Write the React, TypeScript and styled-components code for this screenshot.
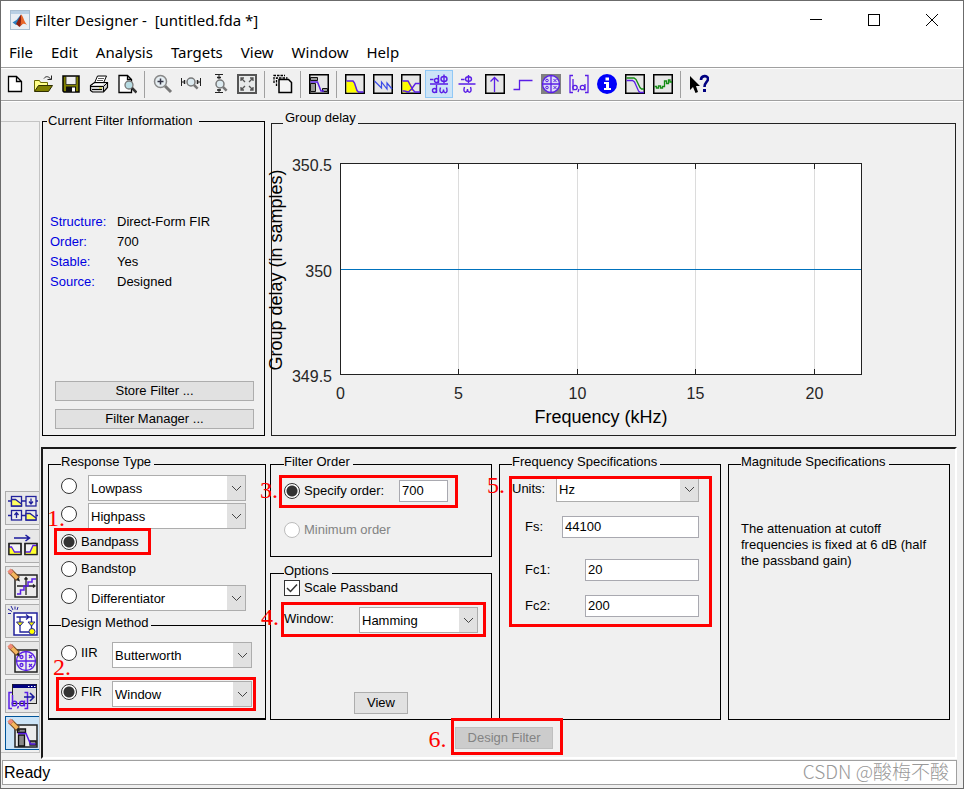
import React from "react";
import styled, { createGlobalStyle } from "styled-components";

const GlobalStyle = createGlobalStyle`
  *, *::before, *::after { box-sizing: border-box; }
  body {
    margin: 0;
    background: #f0f0f0;
    color: #000;
    font-family: "Liberation Sans", Arial, sans-serif;
    font-size: 13px;
    line-height: 16px;
  }
  button, input, select { font: inherit; color: inherit; }
`;

/* ---------- window frame ---------- */

const AppWindow = styled.div`
  display: flex;
  flex-direction: column;
  min-height: 100vh;
  border: 1px solid #6b6b6b;
  background: #f0f0f0;
`;

const TitleBar = styled.header`
  display: flex;
  align-items: center;
  height: 37px;
  padding-left: 9px;
  background: #fff;
`;

const Title = styled.h1`
  flex: 1;
  margin: 0 0 0 5px;
  font: 400 15px/22px "Noto Sans", "Open Sans", sans-serif;
  white-space: pre;
`;

const CaptionButton = styled.button`
  display: grid;
  place-items: center;
  width: 58px;
  height: 36px;
  padding: 0 4px 0 0;
  border: 0;
  background: transparent;
`;

const MenuBar = styled.nav`
  display: flex;
  align-items: center;
  gap: 18px;
  height: 29px;
  padding: 0 0 2px 8px;
  background: #fff;
`;

const MenuItem = styled.button`
  padding: 0;
  border: 0;
  background: transparent;
  font: 400 15px/20px "Noto Sans", "Open Sans", sans-serif;
`;

const ToolBar = styled.div`
  display: flex;
  align-items: center;
  height: 34px;
  border-top: 1px solid #a0a0a0;
  border-bottom: 1px solid #a0a0a0;
  box-shadow: inset 0 1px #fff, 0 1px #fff;
`;

const ToolButton = styled.button<{ $active?: boolean }>`
  display: grid;
  flex: none;
  place-items: center;
  width: 28px;
  height: 28px;
  padding: 0;
  border: 1px solid ${(p) => (p.$active ? "#90c8f6" : "transparent")};
  background: ${(p) => (p.$active ? "#cce4f7" : "transparent")};
`;

const ToolDivider = styled.span`
  flex: none;
  width: 1px;
  height: 27px;
  margin: 0 4px 0 3px;
  background: #a0a0a0;
`;

const Body = styled.div`
  display: flex;
  flex: 1;
`;

const Rail = styled.div`
  display: flex;
  flex: none;
  flex-direction: column;
  justify-content: flex-end;
  width: 39px;
  margin: 20px 0 7px;
  padding: 0 0 2px 4px;
  border: 1px solid #c4c4c4;
  border-left: 0;
`;

const RailList = styled.div`
  display: flex;
  flex-direction: column;
  justify-content: space-between;
  height: 259px;
`;

const RailButton = styled.button<{ $active?: boolean }>`
  width: 34px;
  height: 34px;
  padding: 0;
  border: 1px solid ${(p) => (p.$active ? "#005499" : "#adadad")};
  border-right: 0;
  background: ${(p) => (p.$active ? "#cce4f7" : "#e8e8e8")};
  svg { display: block; }
`;

const Main = styled.main`
  display: flex;
  flex: 1;
  flex-direction: column;
  min-width: 0;
  padding: 10px 6px 1px 1px;
`;

const TopRow = styled.div`
  display: grid;
  flex: 1;
  grid-template-columns: 223fr 685fr;
  gap: 6px;
  padding: 0 1px;
  margin-bottom: 11px;
`;

/* ---------- framed groups ---------- */

const Group = styled.fieldset<{ $pad?: string; $grow?: boolean }>`
  display: flex;
  flex: ${(p) => (p.$grow ? "1" : "none")};
  flex-direction: column;
  min-width: 0;
  margin: 0;
  padding: ${(p) => p.$pad ?? "0"};
  border: 1px solid #000;
`;

const Legend = styled.legend`
  padding: 0 3px 4px 0;
  line-height: 14px;
`;

const InfoGroup = styled(Group)`
  margin-top: 1px;
  ${Legend} { padding: 2px 6px 2px 1px; }
`;

const PlotGroup = styled(Group)`
  border-color: #222;
  ${Legend} { margin-left: 11px; padding: 0 2px 10px 2px; }
`;

const InfoList = styled.dl`
  display: grid;
  flex: 1;
  grid-template-columns: 67px 1fr;
  grid-auto-rows: 20px;
  align-content: start;
  margin: 0;
  padding: 82px 0 0 3px;
  line-height: 20px;
  dt { color: #0000e0; }
  dd { margin: 0; }
`;

const ButtonStack = styled.div`
  display: grid;
  gap: 8px;
  padding: 0 10px 0 8px;
`;

const PushButton = styled.button`
  height: 20px;
  padding: 0 12px;
  border: 1px solid #adadad;
  background: #e1e1e1;
  line-height: 18px;
`;

const TallButton = styled(PushButton)`
  align-self: center;
  height: 22px;
  line-height: 20px;
  &:disabled { border-color: #bfbfbf; background: #ccc; color: #838383; }
`;

const Chart = styled.svg`
  display: block;
  width: 100%;
  overflow: visible;
  font-family: "Liberation Sans", Arial, sans-serif;
`;

/* ---------- design pane ---------- */

const DesignPane = styled.section`
  display: flex;
  flex-direction: column;
  padding: 6px 5px 8px;
  border: solid;
  border-width: 2px;
  border-color: #1a1a1a #fff #fff #1a1a1a;
`;

const Columns = styled.div`
  display: grid;
  grid-template-columns: 218fr 226fr 229fr 229fr;
  min-height: 265px;
`;

const Column = styled.div<{ $lead?: number; $gap?: number }>`
  display: flex;
  flex-direction: column;
  gap: ${(p) => p.$gap ?? 0}px;
  min-width: 0;
  padding-left: ${(p) => p.$lead ?? 0}px;
`;

const ResponseGroup = styled(Group)`
  border-bottom: 0;
`;

const MethodGroup = styled(Group)`
  margin-top: -9px;
  border-bottom-width: 2px;
`;

const Rows = styled.div<{ $gap: number }>`
  display: flex;
  flex-direction: column;
  gap: ${(p) => p.$gap}px;
`;

const ChoiceRow = styled.div<{ $plain?: boolean; $label?: number }>`
  position: relative;
  display: grid;
  grid-template-columns: ${(p) => (p.$plain ? "1fr" : `${p.$label ?? 27}px 1fr`)};
  height: ${(p) => (p.$plain ? 25 : 26)}px;
`;

const ChoiceLabel = styled.label<{ $disabled?: boolean }>`
  display: flex;
  gap: 4px;
  align-items: center;
  height: 16px;
  margin: 3px 0;
  color: ${(p) => (p.$disabled ? "#838383" : "#000")};
  line-height: 18px;
  white-space: nowrap;
`;

const ScaleLabel = styled(ChoiceLabel)`
  margin: -2px 0 11px;
`;

const Radio = styled.input.attrs({ type: "radio" })`
  flex: none;
  width: 16px;
  height: 16px;
  margin: 0;
  appearance: none;
  border: 1px solid #333;
  border-radius: 50%;
  background: #fff;
  &:checked { background: radial-gradient(circle, #333 0 5px, #fff 6px); }
  &:disabled { border-color: #bcbcbc; }
`;

const CheckCell = styled.span`
  display: grid;
  flex: none;
  width: 16px;
  height: 16px;
  > * { grid-area: 1 / 1; }
  svg { pointer-events: none; }
`;

const CheckBox = styled.input.attrs({ type: "checkbox" })`
  width: 16px;
  height: 16px;
  margin: 0;
  appearance: none;
  border: 1px solid #333;
  background: #fff;
`;

const SelectCell = styled.span`
  display: grid;
  min-width: 0;
  > * { grid-area: 1 / 1; }
  svg {
    place-self: center end;
    margin-right: 4px;
    pointer-events: none;
  }
`;

const Select = styled.select`
  width: 100%;
  height: 26px;
  margin: 0;
  padding: 2px 20px 0 2px;
  appearance: none;
  border: 1px solid #adadad;
  border-radius: 0;
  background: linear-gradient(#e1e1e1, #e1e1e1) right / 18px 100% no-repeat #fff;
`;

const TextBox = styled.input.attrs({ type: "text" })`
  width: 100%;
  height: 22px;
  padding: 0 2px 2px;
  border: 1px solid #a9a9b0;
  border-radius: 0;
  background: #fff;
`;

const OrderRow = styled.div`
  position: relative;
  display: grid;
  grid-template-columns: 115px 49px;
  height: 22px;
`;

const FieldRow = styled.div<{ $label: number; $indent?: number }>`
  display: grid;
  grid-template-columns: ${(p) => p.$label}px 1fr;
  align-items: center;
  padding-left: ${(p) => p.$indent ?? 0}px;
`;

const WindowRow = styled(FieldRow)`
  position: relative;
  align-items: start;
  label { margin-top: 4px; }
`;

const FieldStack = styled.div`
  position: relative;
  display: grid;
  grid-template-rows: 26px 29px 22px 22px;
  row-gap: 14px;
  ${FieldRow} { align-self: start; }
`;

const Spring = styled.div`
  flex: 1;
`;

const Note = styled.p`
  margin: 0;
`;

const Footer = styled.div`
  display: flex;
  justify-content: center;
  padding: 7px 0 0 10px;
`;

const FooterItem = styled.div`
  position: relative;
  display: flex;
`;

/* ---------- red step markers laid over the controls ---------- */

const MarkFrame = styled.div<{ $inset: string }>`
  position: absolute;
  inset: ${(p) => p.$inset};
  border: 3px solid #f00;
  pointer-events: none;
`;

const MarkNumber = styled.span<{ $left: number; $top: number }>`
  position: absolute;
  left: ${(p) => p.$left}px;
  top: ${(p) => p.$top}px;
  color: #f00;
  font: 400 24px/24px "Liberation Serif", serif;
  white-space: nowrap;
`;

const StatusBar = styled.footer`
  display: flex;
  align-items: center;
  justify-content: space-between;
  height: 25px;
  margin: 0 6px 3px 1px;
  padding: 0 7px 0 1px;
  border: 1px solid #a0a0a0;
  background: #fff;
  font-size: 16px;
`;

const Watermark = styled.span`
  padding-bottom: 4px;
  color: #999;
  font: 300 19px/20px "Noto Sans CJK SC", sans-serif;
`;

/* ---------- small pieces ---------- */

function Step({ n, inset, left, top }: { n: number; inset: string; left: number; top: number }) {
  return (
    <MarkFrame $inset={inset}>
      <MarkNumber $left={left} $top={top}>{n}.</MarkNumber>
    </MarkFrame>
  );
}

function DropDown({ id, value, options, label }: { id?: string; value: string; options: string[]; label?: string }) {
  return (
    <SelectCell>
      <Select id={id} aria-label={label} defaultValue={value}>
        {[value, ...options].map((o) => <option key={o}>{o}</option>)}
      </Select>
      <svg width="11" height="7" viewBox="0 0 11 7" fill="none" stroke="#444"><path d="M1 1l4.500 4.500L10 1" /></svg>
    </SelectCell>
  );
}

/* ---------- toolbar drawings, 20 x 20 ---------- */

const P = "#5a1ee6";

const Frame = () => <rect x="0.750" y="0.750" width="18.500" height="18.500" fill="#e6e6e6" stroke="#000" strokeWidth="1.500" />;

const magnifier = (cx: number, cy: number, r: number) => (
  <g>
    <circle cx={cx} cy={cy} r={r} fill="#dceaf0" stroke="#777" strokeWidth="1.500" />
    <path d={`M${cx + r * 0.75} ${cy + r * 0.75}l${r * 0.9} ${r * 0.9}`} stroke="#777" strokeWidth="2.500" />
  </g>
);

const toolIcons: Record<string, React.ReactNode> = {
  New: <path d="M3.500 2.500h8l5 5v10h-13zM11.500 2.500v5h5" fill="#fff" stroke="#000" strokeWidth="1.300" />,
  Open: (
    <>
      <path d="M1.500 17V6.500h5l1 2h7v3" fill="#ffff8a" stroke="#6a6a00" />
      <path d="M1.500 17.500l4-6h14l-4 6z" fill="#808000" stroke="#2e2e00" />
      <path d="M11 4.500c2-3 5-2 7 1M18.500 1.500v4h-4" fill="none" stroke="#222" />
    </>
  ),
  Save: (
    <>
      <path d="M2 2h16v16H3l-1-1z" fill="#808000" stroke="#000" strokeWidth="1.500" />
      <path d="M5 2.500h10v8H5z" fill="#eee" stroke="#222" strokeWidth="0.800" />
      <path d="M5 12.500h10V18H5z" fill="#111" /><path d="M11 13.500h3v4h-3z" fill="#fff" />
    </>
  ),
  Print: (
    <>
      <path d="M5.500 9l3-7h9l-3 7z" fill="#fff" stroke="#000" />
      <path d="M9 4.500h6M8 6.500h6" stroke="#333" strokeWidth="0.800" />
      <path d="M1.500 11.500l4-3h13v5l-4 4.500h-11l-2-1.500z" fill="#d4d4d4" stroke="#000" strokeWidth="1.200" />
      <path d="M1.500 12.500h13l4-4M14.500 12.500v5M3 15.500h10" fill="none" stroke="#000" />
      <path d="M4 10.500h10" stroke="#fff" /><path d="M10 13.500h3v1h-3z" fill="#cc0" />
    </>
  ),
  "Print preview": (
    <>
      <path d="M2 1.500h8.500l4 4v13H2zM10.500 1.500v4h4" fill="#fff" stroke="#000" strokeWidth="1.300" />
      <circle cx="12" cy="11" r="4" fill="#b8dde4" stroke="#777" strokeWidth="1.300" />
      <path d="M15 14l4.500 4.500" stroke="#333" strokeWidth="2.500" />
    </>
  ),
  "Zoom in": (
    <>
      <path d="M12 12l6 6" stroke="#777" strokeWidth="3" />
      <circle cx="7.500" cy="7.500" r="6" fill="#e6eef2" stroke="#888" strokeWidth="1.500" />
      <path d="M4.500 7.500h6M7.500 4.500v6" stroke="#334" strokeWidth="1.500" />
    </>
  ),
  "Zoom X": (
    <>
      {magnifier(10, 8, 4)}
      <path d="M0.500 4v8M19.500 4v8M0 8h4M16 8h4" stroke="#222" />
      <path d="M3.500 6v4M16.500 6v4" stroke="#222" strokeWidth="1.500" />
    </>
  ),
  "Zoom Y": (
    <>
      {magnifier(11, 10, 4)}
      <path d="M6 0.500h8M6 18.500h8M10 1v4M10 15v4" stroke="#222" />
      <path d="M8 3.500h4M8 16h4" stroke="#222" strokeWidth="1.500" />
    </>
  ),
  "Full view": (
    <>
      <rect x="1" y="1" width="18" height="18" fill="#e8eaea" stroke="#555" strokeWidth="2" />
      <path d="M4 7V4h3M13 4h3v3M16 13v3h-3M7 16H4v-3M4 4l4 4M16 4l-4 4M16 16l-4-4M4 16l4-4" fill="none" stroke="#555" strokeWidth="1.300" />
    </>
  ),
  "New analysis window": (
    <>
      <path d="M1 9V1.500h11M3.500 12V4h11" fill="none" stroke="#000" strokeWidth="1.300" strokeDasharray="2.500 1" />
      <path d="M6 5.500h9.500l3 3V18.500H6z" fill="#f4f4f4" stroke="#000" strokeWidth="1.500" />
    </>
  ),
  "Filter specifications": (
    <>
      <Frame />
      <path d="M1.500 3.500h7v3h-7zM1.500 9.500h5v8h-5z" fill="#999" stroke="#111" />
      <path d="M13.500 14.500h5v3h-5z" fill="#999" stroke="#111" />
      <path d="M1.500 8h7l3.500 9h3" fill="none" stroke={P} strokeWidth="1.500" />
    </>
  ),
  "Magnitude response": (
    <>
      <Frame /><path d="M1.500 7H9l4 11.500H1.500z" fill="#ff0" />
      <path d="M1.500 7H8l1.500 2 2.500 7.500 1.500 1.500h5" fill="none" stroke={P} strokeWidth="1.500" />
    </>
  ),
  "Phase response": (
    <>
      <Frame /><path d="M1.500 7l7 7V8l5.500 7V9l5 6" fill="none" stroke="#3a4be8" strokeWidth="1.200" />
    </>
  ),
  "Magnitude and phase": (
    <>
      <Frame /><path d="M1.500 7H8l4 7v3H8l-4 1.500H1.500z" fill="#ff0" />
      <path d="M1.500 7H7l5 9 2 2h5M1.500 17h2l4 1 3-3 4-5.500h4.500" fill="none" stroke={P} strokeWidth="1.400" />
    </>
  ),
  "Group delay response": (
    <g fill="none" stroke={P} strokeWidth="1.400">
      <path d="M1 10h18M1 5.500h3.500M9.500 1v8" /><circle cx="7.500" cy="6.500" r="2" />
      <path d="M15 0.500v9" /><ellipse cx="15" cy="5" rx="3" ry="2.500" />
      <path d="M7.500 11v8" /><circle cx="5.500" cy="16.500" r="2" />
      <path d="M11.500 13.500c-2 6 3 7 3 2 0 5 5 4 3-2" />
    </g>
  ),
  "Phase delay": (
    <g fill="none" stroke={P} strokeWidth="1.400">
      <path d="M1.500 10h17M4 5.500h3.500M11.500 1v8" /><ellipse cx="11.500" cy="5" rx="3" ry="2.300" />
      <path d="M7.500 13c-2 6 3 7 3 2 0 5 5 4 3-2" />
    </g>
  ),
  "Impulse response": (
    <>
      <Frame /><path d="M9.500 18V3.500M5.500 7.500l4-4 4 4" fill="none" stroke={P} strokeWidth="1.300" />
    </>
  ),
  "Step response": <path d="M0.500 15.500h6V6.500h13" fill="none" stroke={P} strokeWidth="1.300" />,
  "Pole-zero plot": (
    <>
      <path d="M0 0h20v20H0z" fill="#808080" />
      <g fill="none" stroke={P} strokeWidth="1.300">
        <circle cx="10" cy="10" r="8.500" fill="#dcdcf4" />
        <path d="M10 1v18M1 10h18" />
        <path d="M12.500 5l3 3M15.500 5l-3 3M12.500 12l3 3M15.500 12l-3 3" strokeWidth="1" />
        <circle cx="6" cy="6.500" r="1.300" strokeWidth="1" /><circle cx="6" cy="13.500" r="1.300" strokeWidth="1" />
      </g>
    </>
  ),
  "Filter coefficients": (
    <g fill="none" stroke={P} strokeWidth="1.300">
      <path d="M4 1.500H1v17h3M16 1.500h3v17h-3M4 5v11.500M10 15l-1 3M16 10v6.500" />
      <circle cx="6" cy="13.500" r="2.200" /><circle cx="13.500" cy="13.500" r="2.200" />
    </g>
  ),
  "Filter information": (
    <g>
      <circle cx="10" cy="10" r="10" fill="#0000fa" />
      <path d="M8.500 3.500H12v3H8.500zM7 8h5v6h2v2H7v-2h2v-4H7z" fill="#fff" />
    </g>
  ),
  "Magnitude response estimate": (
    <>
      <Frame />
      <path d="M1.500 4h7.500l2 1.500 4 8 1.500 1.500h2.500" fill="none" stroke="#138a13" strokeWidth="1.300" />
      <path d="M1.500 6.500h6l2 1.500 4 9 1.500 1.500h4" fill="none" stroke={P} strokeWidth="1.300" />
    </>
  ),
  "Round-off noise": (
    <>
      <Frame /><path d="M1.500 12.500h2v1.500h2v-2h2v2h2v-1.500h2V7h2v2.500h2V6h1.500v2h2" fill="none" stroke="#138a13" strokeWidth="1.300" />
    </>
  ),
  "What's this?": (
    <g>
      <path d="M1 2v14l3-3 2.500 6 2.500-1-2-6h4z" fill="#000" />
      <path d="M12 6c0-5 7-5 7-1 0 3-3.500 3-3.500 8" fill="none" stroke="#000080" strokeWidth="2.600" />
      <path d="M14 15h3v3h-3z" fill="#000080" />
    </g>
  ),
};

const toolGroups = [
  ["New", "Open", "Save", "Print", "Print preview"],
  ["Zoom in", "Zoom X", "Zoom Y", "Full view"],
  ["New analysis window"],
  ["Filter specifications"],
  [
    "Magnitude response", "Phase response", "Magnitude and phase", "Group delay response",
    "Phase delay", "Impulse response", "Step response", "Pole-zero plot",
    "Filter coefficients", "Filter information", "Magnitude response estimate", "Round-off noise",
  ],
  ["What's this?"],
];

/* ---------- rail drawings, 33 x 32 ---------- */

const Pencil = () => (
  <g>
    <path d="M4 4l8 8" stroke="#7a4a20" strokeWidth="5.500" />
    <path d="M6 6l6 6" stroke="#f5b860" strokeWidth="3.500" />
    <path d="M3 3l3 3" stroke="#f08a78" strokeWidth="4.500" />
    <path d="M10 13l4 1.500L12.500 10z" fill="#222" />
  </g>
);

const RailFrame = () => <rect x="9" y="8" width="22" height="22" fill="#ececec" stroke="#222" strokeWidth="1.500" />;

const railIcons: [string, React.ReactNode][] = [
  ["Transform filter", (
    <g stroke="#22229c" fill="none" strokeWidth="1.300">
      <path d="M2 9h30M2 23.500h30" />
      <rect x="5.500" y="4.500" width="10" height="9.500" fill="#eee" /><rect x="20" y="4.500" width="10" height="9.500" fill="#eee" />
      <rect x="5.500" y="18.500" width="10" height="9.500" fill="#eee" /><rect x="20" y="18.500" width="10" height="9.500" fill="#eee" />
      <path d="M5.500 7.500h4l6 4.500v2h-10zM20 21.500h4l6 4.500v2H20z" fill="#ffff60" />
      <path d="M25 6.500v5.500M23 9.500l2 2.500 2-2.500M10.500 26v-5.500M8.500 23l2-2.500 2 2.500" />
    </g>
  )],
  ["Multirate filter", (
    <g stroke="#222" fill="none" strokeWidth="1.300">
      <path d="M8 8h15M19.500 5l4 3-4 3" stroke="#1a1a9c" strokeWidth="1.500" />
      <rect x="3" y="13.500" width="12" height="11" fill="#f4f4f4" /><rect x="19" y="13.500" width="12" height="11" fill="#f4f4f4" />
      <path d="M3 17h2.500l3 5H15v2.500H3zM31 15.500h-4L24 22h-5v2.500h12z" fill="#ffff30" stroke="none" />
      <path d="M3 17h2.500l3 5H15M19 22h5l3-6.500h4" stroke={P} />
      <rect x="3" y="13.500" width="12" height="11" /><rect x="19" y="13.500" width="12" height="11" />
    </g>
  )],
  ["Quantization parameters", (
    <>
      <RailFrame />
      <path d="M20 11v17M11 19h18M18.500 12.500l1.500-2 1.500 2M27 17.500l2 1.500-2 1.500" stroke="#222" fill="none" strokeWidth="1.300" />
      <path d="M11 27h3.500v-4H18v-4h4v-4h4v-3h4" fill="none" stroke={P} strokeWidth="1.500" />
      <Pencil />
    </>
  )],
  ["Realize model", (
    <>
      <path d="M2 4l4 2.500M5 1l2 4M2 8.500h3M9 1.500v3M12 2l-1 3" stroke="#22229c" fill="none" />
      <rect x="8" y="8" width="23" height="22" fill="#fff" stroke="#22229c" strokeWidth="1.500" />
      <path d="M10.500 12h15v14M14 12v15h10M20 9.500l3 2.500-3 2.500" fill="none" stroke="#22229c" strokeWidth="1.300" />
      <path d="M10.500 17h7L14 21zM22 17h7l-3.500 4z" fill="#ee0" stroke="#22229c" />
      <circle cx="26" cy="26.500" r="3" fill="#ff0" stroke="#22229c" />
    </>
  )],
  ["Pole-zero editor", (
    <>
      <RailFrame />
      <g fill="none" stroke={P} strokeWidth="1.300">
        <circle cx="20" cy="19" r="9.500" />
        <path d="M20 9v20M10 19h20M23 13l3 3M26 13l-3 3M23 22l3 3M26 22l-3 3" />
        <circle cx="15.500" cy="15" r="1.500" /><circle cx="15.500" cy="23" r="1.500" />
      </g>
      <Pencil />
    </>
  )],
  ["Import filter", (
    <>
      <rect x="6.500" y="4.500" width="24" height="19" fill="#ddd" stroke="#222" />
      <path d="M7 4.500h23v3.500H7z" fill="#000080" />
      <path d="M22 6.500h1.500M25 6.500h1.500M28 6.500h1.500" stroke="#fff" />
      <g fill="none" stroke={P} strokeWidth="1.500">
        <path d="M6 12.500H3v16h3M18.500 12.500h3v16h-3M6.500 15v11.500M12.500 26l-1 2.500M18.500 20.500v6" />
        <circle cx="8.500" cy="23.500" r="2.300" /><circle cx="16" cy="23.500" r="2.300" />
      </g>
      <path d="M18 17h10M24 13l4 4-4 4" fill="none" stroke="#1a1a9c" strokeWidth="1.500" />
    </>
  )],
  ["Design filter", (
    <>
      <RailFrame />
      <path d="M11.500 12h8v3.500h-8zM12.500 18h6v11h-6zM24 24h6v4h-6z" fill="#888" stroke="#111" strokeWidth="1.300" />
      <path d="M12 16.500h8l4.500 10.500h5" fill="none" stroke={P} strokeWidth="1.500" />
      <Pencil />
    </>
  )],
];

/* ---------- group delay plot ---------- */

function GroupDelayPlot() {
  const left = 69, right = 590, top = 28, bottom = 240;
  const x = (v: number) => Math.round(left + (v / 22) * (right - left)) - 0.5;
  return (
    <Chart viewBox="0 0 683 300" role="img" aria-label="Group delay in samples against frequency in kHz">
      <rect x={left - 0.5} y={top + 0.5} width={right - left} height={bottom - top - 1} fill="#fff" stroke="#222" />
      {[5, 10, 15, 20].map((v) => (
        <g key={v}>
          <path d={`M${x(v)} ${top + 1}V${bottom - 1}`} stroke="#dcdcdc" />
          <path d={`M${x(v)} ${top + 1}v5M${x(v)} ${bottom - 1}v-5`} stroke="#222" />
        </g>
      ))}
      <path d={`M${left - 0.5} 134.500H${right}`} stroke="#0072bd" />
      <path d={`M${left - 0.5} ${top}V${bottom}M${right - 0.5} ${top}V${bottom}`} stroke="#222" />
      <g fontSize="16" fill="#262626">
        {[0, 5, 10, 15, 20].map((v) => (
          <text key={v} x={x(v)} y="264" textAnchor="middle">{v}</text>
        ))}
        <g textAnchor="end">
          <text x="60" y="36">350.5</text>
          <text x="60" y="142">350</text>
          <text x="60" y="247">349.5</text>
        </g>
      </g>
      <g fontSize="18" fill="#000" textAnchor="middle">
        <text x="329" y="288">Frequency (kHz)</text>
        <text transform="translate(10 135) rotate(-90)">Group delay (in samples)</text>
      </g>
    </Chart>
  );
}

/* ---------- page ---------- */

export default function App() {
  return (
    <AppWindow>
      <GlobalStyle />
      <TitleBar>
        <svg width="20" height="20" viewBox="0 0 20 20" aria-hidden="true">
          <rect x="0.500" y="0.500" width="19" height="19" fill="#e9eef4" stroke="#a9bdd0" />
          <path d="M1 1h18v3H1z" fill="#b9cfe4" />
          <path d="M2.500 12.500l4-2.500L11 4.500 9 13l-3 2z" fill="#2b7fc0" />
          <path d="M11 4.500L6 14l3.500 3 3-3z" fill="#8c1f10" />
          <path d="M11 4.500c2 1 3 7 6 10.500-3-2-5-2-7.500 2 2-3 1.500-8 1.500-12.500z" fill="#e8662a" />
        </svg>
        <Title>{"Filter Designer -  [untitled.fda *]"}</Title>
        <CaptionButton aria-label="Minimize">
          <svg width="12" height="12" stroke="#000"><path d="M0 5.500h12" /></svg>
        </CaptionButton>
        <CaptionButton aria-label="Maximize">
          <svg width="12" height="12" stroke="#000" fill="none"><rect x="0.500" y="0.500" width="11" height="11" /></svg>
        </CaptionButton>
        <CaptionButton aria-label="Close">
          <svg width="12" height="12" stroke="#000"><path d="M0 0l12 12M12 0L0 12" /></svg>
        </CaptionButton>
      </TitleBar>

      <MenuBar>
        {["File", "Edit", "Analysis", "Targets", "View", "Window", "Help"].map((m) => (
          <MenuItem key={m}>{m}</MenuItem>
        ))}
      </MenuBar>

      <ToolBar role="toolbar">
        {toolGroups.map((group, i) => (
          <React.Fragment key={i}>
            {i > 0 && <ToolDivider />}
            {group.map((name) => (
              <ToolButton key={name} aria-label={name} $active={name === "Group delay response"}>
                <svg width="20" height="20" viewBox="0 0 20 20">{toolIcons[name]}</svg>
              </ToolButton>
            ))}
          </React.Fragment>
        ))}
      </ToolBar>

      <Body>
        <Rail>
          <RailList>
            {railIcons.map(([name, art]) => (
              <RailButton key={name} aria-label={name} $active={name === "Design filter"}>
                <svg width="33" height="32" viewBox="0 0 33 32">{art}</svg>
              </RailButton>
            ))}
          </RailList>
        </Rail>

        <Main>
          <TopRow>
            <InfoGroup $pad="0 0 6px 4px">
              <Legend>Current Filter Information</Legend>
              <InfoList>
                <dt>Structure:</dt><dd>Direct-Form FIR</dd>
                <dt>Order:</dt><dd>700</dd>
                <dt>Stable:</dt><dd>Yes</dd>
                <dt>Source:</dt><dd>Designed</dd>
              </InfoList>
              <ButtonStack>
                <PushButton>Store Filter ...</PushButton>
                <PushButton>Filter Manager ...</PushButton>
              </ButtonStack>
            </InfoGroup>
            <PlotGroup>
              <Legend>Group delay</Legend>
              <GroupDelayPlot />
            </PlotGroup>
          </TopRow>

          <DesignPane>
            <Columns>
              <Column>
                <ResponseGroup $pad="2px 19px 14px 12px">
                  <Legend>Response Type</Legend>
                  <Rows $gap={2}>
                    <ChoiceRow>
                      <ChoiceLabel><Radio name="response" aria-label="Lowpass type" /></ChoiceLabel>
                      <DropDown value="Lowpass" options={["Raised-cosine"]} label="Lowpass type" />
                    </ChoiceRow>
                    <ChoiceRow>
                      <ChoiceLabel><Radio name="response" aria-label="Highpass type" /></ChoiceLabel>
                      <DropDown value="Highpass" options={["Halfband highpass"]} label="Highpass type" />
                    </ChoiceRow>
                    <ChoiceRow $plain>
                      <ChoiceLabel><Radio name="response" defaultChecked />Bandpass</ChoiceLabel>
                      <Step n={1} inset="-3px 95px 1px -7px" left={-10} top={-25} />
                    </ChoiceRow>
                    <ChoiceRow $plain>
                      <ChoiceLabel><Radio name="response" />Bandstop</ChoiceLabel>
                    </ChoiceRow>
                    <ChoiceRow>
                      <ChoiceLabel><Radio name="response" aria-label="Other type" /></ChoiceLabel>
                      <DropDown value="Differentiator" options={["Multiband"]} label="Other type" />
                    </ChoiceRow>
                  </Rows>
                </ResponseGroup>
                <MethodGroup $grow $pad="8px 13px 10px 12px">
                  <Legend>Design Method</Legend>
                  <Rows $gap={13}>
                    <ChoiceRow $label={51}>
                      <ChoiceLabel><Radio name="method" />IIR</ChoiceLabel>
                      <DropDown value="Butterworth" options={["Elliptic"]} label="IIR method" />
                    </ChoiceRow>
                    <ChoiceRow $label={51}>
                      <ChoiceLabel><Radio name="method" defaultChecked />FIR</ChoiceLabel>
                      <DropDown value="Window" options={["Equiripple"]} label="FIR method" />
                      <Step n={2} inset="-4px -4px -4px -5px" left={-6} top={-25} />
                    </ChoiceRow>
                  </Rows>
                </MethodGroup>
              </Column>

              <Column $lead={4} $gap={7}>
                <Group $pad="7px 12px 15px 13px">
                  <Legend>Filter Order</Legend>
                  <Rows $gap={17}>
                    <OrderRow>
                      <ChoiceLabel><Radio name="order" defaultChecked />Specify order:</ChoiceLabel>
                      <TextBox defaultValue="700" aria-label="Order" />
                      <Step n={3} inset="-5px 21px -6px -5px" left={-22} top={0} />
                    </OrderRow>
                    <OrderRow>
                      <ChoiceLabel $disabled><Radio name="order" disabled />Minimum order</ChoiceLabel>
                    </OrderRow>
                  </Rows>
                </Group>
                <Group $grow $pad="0 13px 5px">
                  <Legend>Options</Legend>
                  <ScaleLabel>
                    <CheckCell>
                      <CheckBox defaultChecked />
                      <svg width="16" height="16" fill="none" stroke="#333" strokeWidth="1.500"><path d="M3 8l3.500 3.500L13 4.500" /></svg>
                    </CheckCell>
                    Scale Passband
                  </ScaleLabel>
                  <WindowRow $label={75}>
                    <label htmlFor="window">Window:</label>
                    <DropDown id="window" value="Hamming" options={["Kaiser"]} />
                    <Step n={4} inset="-5px -8px -4px -3px" left={-23} top={0} />
                  </WindowRow>
                  <Spring />
                  <TallButton>View</TallButton>
                </Group>
              </Column>

              <Column $lead={7}>
                <Group $grow $pad="3px 21px 0 12px">
                  <Legend>Frequency Specifications</Legend>
                  <FieldStack>
                    <FieldRow $label={44}>
                      <label htmlFor="units">Units:</label>
                      <DropDown id="units" value="Hz" options={["kHz"]} />
                    </FieldRow>
                    <FieldRow $label={37} $indent={13}>
                      <label htmlFor="fs">Fs:</label>
                      <TextBox id="fs" defaultValue="44100" />
                    </FieldRow>
                    <FieldRow $label={60} $indent={13}>
                      <label htmlFor="fc1">Fc1:</label>
                      <TextBox id="fc1" defaultValue="20" />
                    </FieldRow>
                    <FieldRow $label={60} $indent={13}>
                      <label htmlFor="fc2">Fc2:</label>
                      <TextBox id="fc2" defaultValue="200" />
                    </FieldRow>
                    <Step n={5} inset="0 -13px -10px -3px" left={-25} top={-6} />
                  </FieldStack>
                </Group>
              </Column>

              <Column $lead={7}>
                <Group $grow $pad="48px 12px 0 12px">
                  <Legend>Magnitude Specifications</Legend>
                  <Note>The attenuation at cutoff frequencies is fixed at 6 dB (half the passband gain)</Note>
                </Group>
              </Column>
            </Columns>
            <Footer>
              <FooterItem>
                <TallButton disabled>Design Filter</TallButton>
                <Step n={6} inset="-9px -10px -6px -4px" left={-25} top={6} />
              </FooterItem>
            </Footer>
          </DesignPane>
        </Main>
      </Body>

      <StatusBar>
        <span>Ready</span>
        <Watermark>CSDN @酸梅不酸</Watermark>
      </StatusBar>
    </AppWindow>
  );
}
